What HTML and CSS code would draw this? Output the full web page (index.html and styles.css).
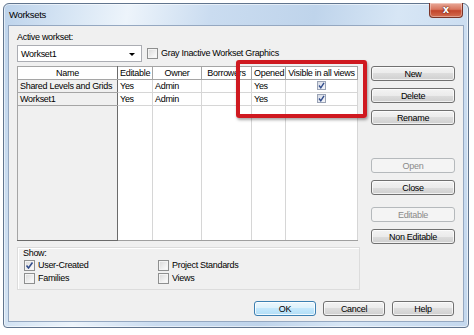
FILE: index.html
```html
<!DOCTYPE html>
<html lang="en">
<head>
    <meta charset="UTF-8">
    <meta name="viewport" content="width=device-width, initial-scale=1.0">
    <title>Worksets</title>
    <link rel="stylesheet" href="styles.css">
</head>
<body>
    <div class="window">
        <div class="title-bar">
            <span class="title">Worksets</span>
            <button class="close-btn">x</button>
        </div>
        <div class="client">
            <div class="label">Active workset:</div>
            <div class="active-row">
                <div class="combo">
                    <span>Workset1</span>
                    <span class="combo-arrow"></span>
                </div>
                <label class="check">
                    <span class="box"></span>
                    <span>Gray Inactive Workset Graphics</span>
                </label>
            </div>
            <div class="main-row">
                <div class="grid-wrap">
                    <table class="grid">
                        <colgroup>
                            <col style="width: 100px">
                            <col style="width: 35px">
                            <col style="width: 49px">
                            <col style="width: 50px">
                            <col style="width: 34px">
                            <col style="width: 72px">
                        </colgroup>
                        <thead>
                            <tr>
                                <th class="rowhead">Name</th>
                                <th>Editable</th>
                                <th>Owner</th>
                                <th>Borrowers</th>
                                <th>Opened</th>
                                <th>Visible in all views</th>
                            </tr>
                        </thead>
                        <tbody>
                            <tr>
                                <td class="rowhead">Shared Levels and Grids</td>
                                <td>Yes</td>
                                <td>Admin</td>
                                <td></td>
                                <td>Yes</td>
                                <td class="center"><span class="mini-check"></span></td>
                            </tr>
                            <tr>
                                <td class="rowhead">Workset1</td>
                                <td>Yes</td>
                                <td>Admin</td>
                                <td></td>
                                <td>Yes</td>
                                <td class="center"><span class="mini-check"></span></td>
                            </tr>
                            <tr class="filler">
                                <td class="rowhead"></td>
                                <td></td>
                                <td></td>
                                <td></td>
                                <td></td>
                                <td></td>
                            </tr>
                        </tbody>
                    </table>
                    <div class="highlight"></div>
                </div>
                <div class="side-buttons">
                    <div class="btn-group">
                        <button class="btn">New</button>
                        <button class="btn">Delete</button>
                        <button class="btn">Rename</button>
                    </div>
                    <div class="btn-group group-open">
                        <button class="btn" disabled>Open</button>
                        <button class="btn">Close</button>
                    </div>
                    <div class="btn-group group-edit">
                        <button class="btn" disabled>Editable</button>
                        <button class="btn">Non Editable</button>
                    </div>
                </div>
            </div>
            <div class="show-group">
                <div class="show-title">Show:</div>
                <div class="show-options">
                    <label class="check"><span class="box checked"></span><span>User-Created</span></label>
                    <label class="check"><span class="box"></span><span>Project Standards</span></label>
                    <label class="check"><span class="box"></span><span>Families</span></label>
                    <label class="check"><span class="box"></span><span>Views</span></label>
                </div>
            </div>
            <div class="footer">
                <button class="btn btn-wide btn-default">OK</button>
                <button class="btn btn-wide">Cancel</button>
                <button class="btn btn-wide">Help</button>
            </div>
        </div>
    </div>
</body>
</html>
```

FILE: styles.css
```css
body {
    margin: 0;
    background-color: #ffffff;
    font-family: "Liberation Sans", Arial, sans-serif;
    font-size: 9px;
    letter-spacing: -0.3px;
    color: #000;
}
.window {
    box-sizing: border-box;
    width: 466px;
    height: 325px;
    margin: 3px 0 0 3px;
    padding: 0 4px 5px 4px;
    border: 1px solid #61758e;
    border-radius: 6px 6px 4px 4px;
    background: linear-gradient(100deg, #bdd3eb 0%, #d9e7f5 14%, #edf4fb 24%, #cadcf0 40%, #bfd4eb 60%, #d7e6f5 76%, #c4d8ee 100%);
    box-shadow: inset 0 0 0 1px rgba(255, 255, 255, 0.55);
    display: flex;
    flex-direction: column;
}
.title-bar {
    height: 21px;
    display: flex;
    justify-content: space-between;
    align-items: flex-start;
}
.title {
    margin: 5px 0 0 1px;
    font-size: 9.5px;
    line-height: 12px;
}
.close-btn {
    width: 34px;
    height: 15px;
    margin: -1px 1px 0 0;
    padding: 0;
    border: 1px solid #7a3427;
    border-top: none;
    border-radius: 0 0 4px 4px;
    background: linear-gradient(#e9a999 0%, #d8765f 45%, #c3452b 55%, #d36d50 100%);
    box-shadow: inset 0 0 0 1px rgba(255, 255, 255, 0.35);
    color: #ffffff;
    font-family: "DejaVu Sans", sans-serif;
    font-size: 10px;
    font-weight: bold;
    line-height: 12px;
    text-shadow: 0 0 2px #5a1a10, 0 0 1px #5a1a10;
}
.client {
    flex: 1;
    box-sizing: border-box;
    padding: 5px 8px 0 8px;
    background-color: #f0f0f0;
    border: 1px solid #95a8c1;
}
.label {
    line-height: 12px;
}
.active-row {
    display: flex;
    align-items: center;
    margin-top: 2px;
}
.combo {
    box-sizing: border-box;
    width: 125px;
    height: 17px;
    padding: 0 6px 0 3px;
    background-color: #ffffff;
    border: 1px solid #abadb3;
    display: flex;
    justify-content: space-between;
    align-items: center;
}
.combo-arrow {
    width: 0;
    height: 0;
    border-left: 3px solid transparent;
    border-right: 3px solid transparent;
    border-top: 3px solid #000;
    margin-top: 1px;
}
.active-row .check {
    margin-left: 5px;
}
.check {
    display: flex;
    align-items: center;
    gap: 3px;
    line-height: 13px;
    white-space: nowrap;
}
.box {
    box-sizing: border-box;
    width: 11px;
    height: 11px;
    border: 1px solid #8e8f8f;
    background: linear-gradient(135deg, #d8d8d8 0%, #f0f0f0 60%, #ffffff 100%);
    box-shadow: inset 0 0 0 1px #f4f4f4;
    flex-shrink: 0;
}
.box.checked {
    background: url("data:image/svg+xml,%3Csvg xmlns='http://www.w3.org/2000/svg' width='9' height='9'%3E%3Cpath d='M1.5 4.5 L3.5 7 L7.5 1.5' fill='none' stroke='%23324d8c' stroke-width='1.6'/%3E%3C/svg%3E") center no-repeat, linear-gradient(135deg, #d8d8d8 0%, #f0f0f0 60%, #ffffff 100%);
}
.main-row {
    display: flex;
    align-items: flex-start;
    gap: 13px;
    margin-top: 4px;
}
.grid-wrap {
    position: relative;
}
.grid {
    width: 340px;
    height: 175px;
    table-layout: fixed;
    border-collapse: collapse;
    background-color: #ffffff;
    border: 1px solid #a0a0a0;
}
.grid th,
.grid td {
    height: 12px;
    padding: 0 2px;
    line-height: 12px;
    border: 1px solid #d6d6d6;
    text-align: left;
    white-space: nowrap;
    overflow: hidden;
}
.grid th {
    font-weight: normal;
    text-align: center;
    border-color: #a5a5a5;
    background-color: #ffffff;
}
.grid .rowhead {
    background-color: #f0f0f0;
    border-color: #a5a5a5;
    border-right: 1px solid #6b6b6b;
}
.grid th.rowhead {
    background-color: #ffffff;
}
.grid .filler td {
    height: auto;
    border-bottom: 1px solid #a0a0a0;
}
.grid .filler .rowhead {
    border-bottom: 1px solid #6b6b6b;
}
.grid .center {
    text-align: center;
}
.mini-check {
    display: inline-block;
    box-sizing: border-box;
    width: 9px;
    height: 9px;
    vertical-align: middle;
    margin-top: -2px;
    border: 1px solid #9aa3b5;
    background: url("data:image/svg+xml,%3Csvg xmlns='http://www.w3.org/2000/svg' width='7' height='7'%3E%3Cpath d='M1 3.5 L2.8 5.8 L6 0.8' fill='none' stroke='%23324d8c' stroke-width='1.4'/%3E%3C/svg%3E") center no-repeat, linear-gradient(135deg, #d6dbe6, #f6f7fa);
}
.highlight {
    position: absolute;
    left: 219px;
    top: -6px;
    width: 131px;
    height: 58px;
    box-sizing: border-box;
    border: 4px solid #cf1920;
    border-radius: 3px;
    box-shadow: 1px 2px 3px rgba(0, 0, 0, 0.35);
}
.side-buttons {
    width: 85px;
    display: flex;
    flex-direction: column;
}
.btn-group {
    display: flex;
    flex-direction: column;
    gap: 7px;
}
.group-open {
    margin-top: 33px;
}
.group-edit {
    margin-top: 12px;
}
.btn {
    box-sizing: border-box;
    height: 15px;
    padding: 0;
    border: 1px solid #707070;
    border-radius: 3px;
    background: linear-gradient(#f3f3f3 0%, #ebebeb 50%, #dddddd 50%, #cfcfcf 100%);
    box-shadow: inset 0 0 0 1px rgba(255, 255, 255, 0.7);
    font-family: inherit;
    font-size: 9px;
    letter-spacing: inherit;
    line-height: 12px;
    color: #000;
}
.btn:disabled {
    border-color: #b5b9bc;
    background: #f4f4f4;
    box-shadow: none;
    color: #8a8a8a;
}
.show-group {
    box-sizing: border-box;
    width: 343px;
    height: 43px;
    margin-top: 3px;
    padding: 0 0 0 6px;
    border: 1px solid #dcdcdc;
    box-shadow: inset 1px 1px 0 #ffffff;
}
.show-title {
    line-height: 11px;
    margin-left: -1px;
}
.show-options {
    display: grid;
    grid-template-columns: 134px 1fr;
}
.footer {
    display: flex;
    justify-content: flex-end;
    gap: 7px;
    margin: 11px 1px 0 0;
}
.btn-wide {
    width: 62px;
}
.btn-default {
    border-color: #3c7fb1;
    background: linear-gradient(#ecf7fd 0%, #dcf1fc 50%, #c5e8fc 50%, #b0ddf6 100%);
    box-shadow: inset 0 0 0 1px rgba(255, 255, 255, 0.8);
}
```
